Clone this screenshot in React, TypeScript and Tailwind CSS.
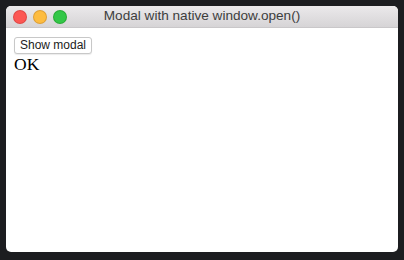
export default function App() {
  return (
    <div className="flex h-[260px] w-[404px] bg-[#1c1d20] px-[6px] pt-[6px] pb-[8px]">
      <div className="flex flex-1 flex-col overflow-hidden rounded-[5px] bg-white">
        {/* title bar */}
        <div className="relative flex h-[22px] items-center justify-center border-b border-[#c9c7c9] bg-gradient-to-b from-[#ebe9eb] to-[#d6d4d6]">
          <div className="absolute left-[8px] top-[5px] flex gap-[8px]">
            <span className="h-[12px] w-[12px] rounded-full bg-[#fc5753] ring-1 ring-[#df4744]" />
            <span className="h-[12px] w-[12px] rounded-full bg-[#fdbc40] ring-1 ring-[#de9f34]" />
            <span className="h-[12px] w-[12px] rounded-full bg-[#33c748] ring-1 ring-[#27aa35]" />
          </div>
          <span className="font-['Liberation_Sans',sans-serif] text-[13.6px] text-[#3d3d3d]">
            Modal with native window.open()
          </span>
        </div>

        {/* content */}
        <div className="flex flex-col items-start px-[8px] pt-[9px]">
          <button className="h-[17px] rounded-[3px] border border-[#c8c8c8] bg-white px-[5px] font-['Liberation_Sans',sans-serif] text-[12px] leading-[15px] text-[#222] shadow-[0_1px_1px_rgba(0,0,0,0.08)]">
            Show modal
          </button>
          <span className="mt-[1px] font-['Liberation_Serif',serif] text-[17.5px] leading-[18px] text-black">OK</span>
        </div>
      </div>
    </div>
  );
}
